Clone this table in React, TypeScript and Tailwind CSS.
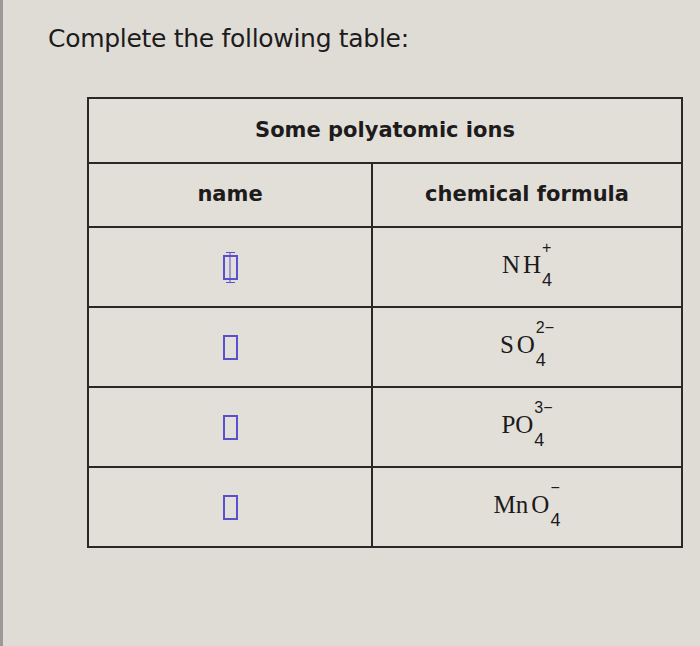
import React from "react";

type Ion = { base: string[]; sub: string; sup: string; cursor?: boolean };

const ions: Ion[] = [
  { base: ["N", "H"], sub: "4", sup: "+", cursor: true },
  { base: ["S", "O"], sub: "4", sup: "2\u2212" },
  { base: ["PO"], sub: "4", sup: "3\u2212" },
  { base: ["Mn", "O"], sub: "4", sup: "\u2212" },
];

function AnswerBox({ cursor }: { cursor?: boolean }) {
  return (
    <span className="relative inline-block h-[25px] w-[15px] border-[2.5px] border-[#5a4fd0] align-middle">
      {cursor && (
        <>
          <span className="absolute left-1/2 top-[-5px] bottom-[-5px] w-px -translate-x-1/2 bg-[#5a4fd0]" />
          <span className="absolute left-[1px] right-[1px] top-[-5px] h-px bg-[#5a4fd0]" />
          <span className="absolute left-[1px] right-[1px] bottom-[-5px] h-px bg-[#5a4fd0]" />
        </>
      )}
    </span>
  );
}

function Formula({ ion }: { ion: Ion }) {
  return (
    <span className="inline-flex items-center font-['Liberation_Serif',serif] text-[25px] text-[#1c1a1a] translate-y-[-2px]">
      {ion.base.map((b, i) => (
        <span key={i} className={i > 0 ? "ml-[3px]" : ""}>
          {b}
        </span>
      ))}
      <span className="ml-[1px] inline-flex flex-col items-start leading-none">
        <span className="h-[15px] text-[16px] font-['Liberation_Sans',sans-serif] translate-y-[-10px]">
          {ion.sup}
        </span>
        <span className="h-[15px] text-[18px] font-['Liberation_Sans',sans-serif] translate-y-[6px]">
          {ion.sub}
        </span>
      </span>
    </span>
  );
}

export default function App() {
  return (
    <div className="h-[646px] w-[700px] overflow-hidden border-l-[3px] border-[#9c9a96] bg-[#dfdcd6] font-['DejaVu_Sans',sans-serif] text-[#1d1b1b]">
      <h1 className="pl-[45px] pt-[22px] text-[25px] leading-[34px] tracking-[-0.3px]">
        Complete the following table:
      </h1>

      <table className="ml-[84px] mt-[41px] w-[596px] border-collapse border-2 border-[#2a2826] bg-[#e2dfd9]">
        <thead>
          <tr>
            <th
              colSpan={2}
              className="h-[65px] border-2 border-[#2a2826] text-[21px] font-bold"
            >
              Some polyatomic ions
            </th>
          </tr>
          <tr>
            <th className="h-[64px] w-[284px] border-2 border-[#2a2826] text-[21px] font-bold">
              name
            </th>
            <th className="h-[64px] border-2 border-[#2a2826] text-[21px] font-bold">
              chemical formula
            </th>
          </tr>
        </thead>
        <tbody>
          {ions.map((ion, i) => (
            <tr key={i}>
              <td className="h-[80px] border-2 border-[#2a2826] text-center">
                <AnswerBox cursor={ion.cursor} />
              </td>
              <td className="h-[80px] border-2 border-[#2a2826] text-center">
                <Formula ion={ion} />
              </td>
            </tr>
          ))}
        </tbody>
      </table>
    </div>
  );
}
